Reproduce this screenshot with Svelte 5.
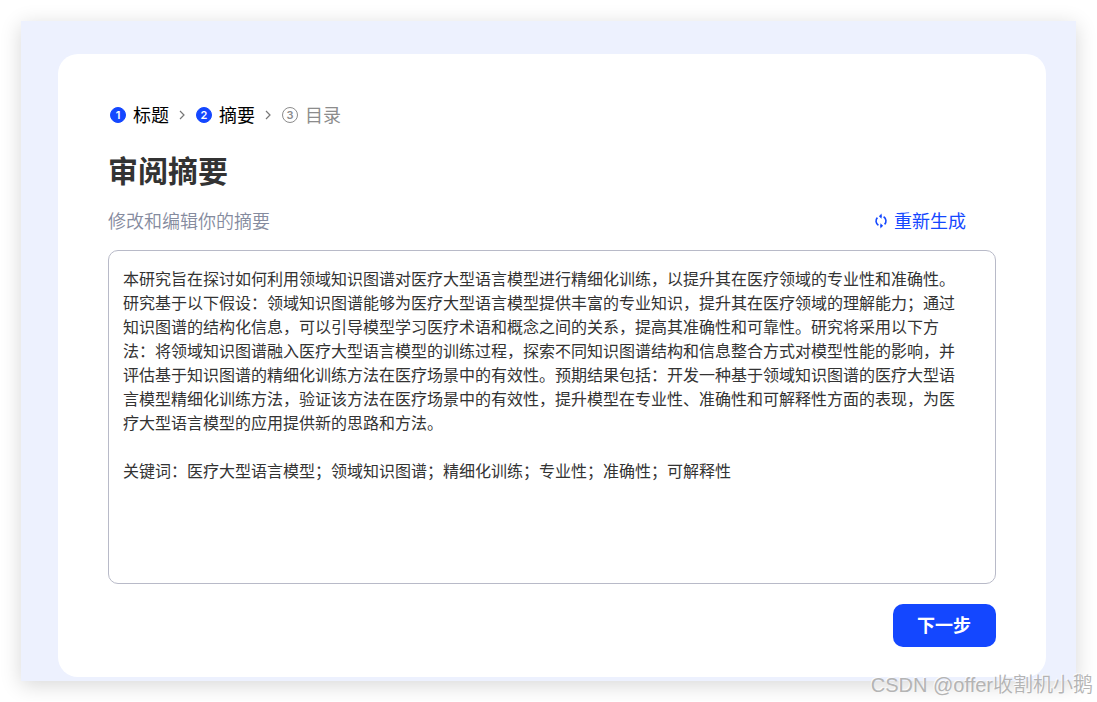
<script lang="ts">
  // 论文生成向导第二步：审阅并编辑摘要
  interface Step {
    label: string;
    done: boolean;
  }

  const steps: Step[] = [
    { label: '标题', done: true },
    { label: '摘要', done: true },
    { label: '目录', done: false },
  ];

  let summary = $state(
    '本研究旨在探讨如何利用领域知识图谱对医疗大型语言模型进行精细化训练，以提升其在医疗领域的专业性和准确性。研究基于以下假设：领域知识图谱能够为医疗大型语言模型提供丰富的专业知识，提升其在医疗领域的理解能力；通过知识图谱的结构化信息，可以引导模型学习医疗术语和概念之间的关系，提高其准确性和可靠性。研究将采用以下方法：将领域知识图谱融入医疗大型语言模型的训练过程，探索不同知识图谱结构和信息整合方式对模型性能的影响，并评估基于知识图谱的精细化训练方法在医疗场景中的有效性。预期结果包括：开发一种基于领域知识图谱的医疗大型语言模型精细化训练方法，验证该方法在医疗场景中的有效性，提升模型在专业性、准确性和可解释性方面的表现，为医疗大型语言模型的应用提供新的思路和方法。\n\n关键词：医疗大型语言模型；领域知识图谱；精细化训练；专业性；准确性；可解释性'
  );
</script>

<div class="page">
  <div class="panel">
    <main class="card">
      <ol class="steps">
        {#each steps as step, i (step.label)}
          {#if i > 0}
            <li class="sep" aria-hidden="true">
              <svg width="6" height="10" viewBox="0 0 6 10"><path d="M1 1l4 4-4 4" /></svg>
            </li>
          {/if}
          <li class="step" class:done={step.done}>
            <span class="num">{i + 1}</span>
            <span>{step.label}</span>
          </li>
        {/each}
      </ol>

      <h1>审阅摘要</h1>

      <div class="bar">
        <label for="summary">修改和编辑你的摘要</label>
        <button type="button" class="regen">
          <svg width="14" height="16" viewBox="0 0 14 16" aria-hidden="true">
            <path class="arc" d="M4.4 12.2A4.9 4.9 0 0 1 3.4 4.6M6.5 3.2A4.9 4.9 0 0 1 7.6 3.2M9.6 3.8A4.9 4.9 0 0 1 10.6 11.4M7.5 12.8A4.9 4.9 0 0 1 6.4 12.8" />
            <path class="tip" d="M7.6 .6v5.2L4.9 3.2zM6.4 15.4v-5.2l2.7 2.6z" />
          </svg>
          重新生成
        </button>
      </div>

      <textarea id="summary" bind:value={summary}></textarea>

      <div class="actions">
        <button type="button" class="next">下一步</button>
      </div>
    </main>
  </div>
  <span class="mark">CSDN @offer收割机小鹅</span>
</div>

<style>
  :global(body) { background: #fff; }
  .page {
    position: relative; padding: 21px 21px 20px;
    font-family: "Noto Sans", "Noto Sans CJK SC", sans-serif; color: #333;
  }
  .panel {
    padding: 33px 30px 4px 37px; background: #edf1fe;
    box-shadow: 0 4px 20px rgba(0, 0, 0, 0.16);
  }
  .card { padding: 49px 50px 30px; border-radius: 20px; background: #fff; }

  .steps {
    display: flex; align-items: center; margin: 0; padding: 0 0 0 2px;
    list-style: none; font-size: 18px; line-height: 24px;
  }
  .step { display: flex; align-items: center; gap: 7px; color: #8c8c8c; }
  .step.done { color: #000; }
  .num {
    display: flex; align-items: center; justify-content: center; box-sizing: border-box;
    width: 16px; height: 16px; border: 1px solid #8c8c8c; border-radius: 50%;
    font: 600 11px/14px Inter, sans-serif;
  }
  .done .num { border-color: #1447ff; background: #1447ff; color: #fff; }
  .sep { display: flex; margin: 0 11px 0 10px; }
  .sep svg { fill: none; stroke: #777; stroke-width: 1.2; }

  h1 { margin: 24px 0 0; font-size: 30px; line-height: 40px; font-weight: 700; }

  .bar {
    display: flex; align-items: center; justify-content: space-between;
    margin: 16px 30px 15px 0; font-size: 18px; line-height: 28px; font-weight: 350;
  }
  label { color: #858b9e; }
  button { border: none; font-family: inherit; cursor: pointer; }
  .regen {
    display: flex; align-items: center; gap: 6px; padding: 0;
    background: none; color: #1447ff; font-size: 18px; line-height: 28px;
  }
  .arc { fill: none; stroke: #1447ff; stroke-width: 1.6; }
  .tip { fill: #1447ff; }

  textarea {
    display: block; box-sizing: border-box; width: 100%; height: 334px;
    padding: 16px 26px 16px 14px; border: 1px solid #b8bac8; border-radius: 10px;
    background: #fff; color: #333; resize: none; outline: none;
    font-family: inherit; font-size: 16px; line-height: 24px;
  }
  textarea:focus { border-color: #1447ff; }

  .actions { display: flex; justify-content: flex-end; margin-top: 20px; }
  .next {
    padding: 0 25px 0 24px; border-radius: 10px; background: #1447ff; color: #fff;
    font-size: 18px; line-height: 43px; font-weight: 700;
  }

  /* 水印 */
  .mark {
    position: absolute; right: 4px; bottom: 2px; color: #b4b4b4;
    font-family: "Liberation Sans", "Noto Sans CJK SC", sans-serif;
    font-size: 20px; line-height: 28px; font-weight: 350; white-space: nowrap;
    text-shadow: -1px -1px 0 rgba(255, 255, 255, 0.8);
  }
</style>
